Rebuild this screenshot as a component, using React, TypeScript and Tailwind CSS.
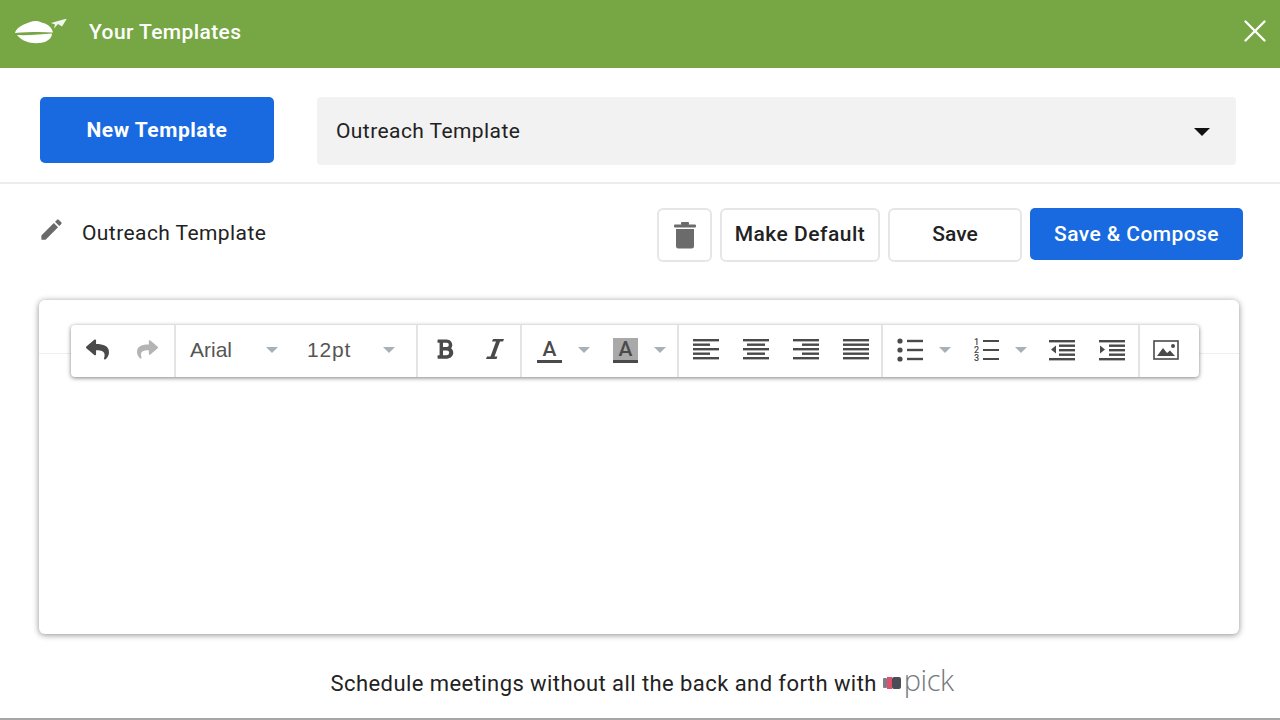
import { FaReply, FaShare, FaBold } from 'react-icons/fa';
import { MdEdit } from 'react-icons/md';
import { X } from 'lucide-react';

// Small grey triangle next to toolbar dropdowns
function Caret({ className = '' }: { className?: string }) {
  return <span className={`block w-0 h-0 border-x-[6px] border-x-transparent border-t-[6px] border-t-[#a9b1b8] ${className}`} />;
}

// Stacked bars used by alignment + indent icons. Each row: [x, width]
function Bars({ rows }: { rows: [number, number][] }) {
  return (
    <svg width="26" height="22" viewBox="0 0 26 22" fill="#4a4a4a">
      {rows.map(([x, w], i) => (
        <rect key={i} x={x} y={1 + i * 4.5} width={w} height="2.4" />
      ))}
    </svg>
  );
}

function Logo() {
  return (
    <svg width="54" height="30" viewBox="14 19 54 30" fill="#fff">
      <path d="M15 33c1-4 5-7 10-9 4-2 8-3.500 12-3 3 .500 5 2 8 2.500 4 1.500 7 5 8 9-12-1-26-.500-38 .500z" />
      <path d="M17 35c11 .500 25-.500 35-1.500 0 3-2 6-6 8-8 3-22 2.500-29-6.500z" />
      <path d="M51 23l16-4.500-5 8-4-2.500-4 4.500 1-4z" opacity=".9" />
    </svg>
  );
}

function TrashIcon() {
  return (
    <svg width="24" height="28" viewBox="0 0 24 28" fill="#6b6b6b">
      <rect x="1" y="3.5" width="22" height="3" rx="1" />
      <rect x="8" y="1" width="8" height="3" rx="1" />
      <path d="M3 8h18v17a2.500 2.500 0 0 1-2.500 2.500h-13A2.500 2.500 0 0 1 3 25z" />
    </svg>
  );
}

function ItalicIcon() {
  return (
    <svg width="18" height="20" viewBox="0 0 18 20" fill="#4a4a4a">
      <path d="M7 0h11l-1 2.500h-3L8.500 17.500h3l-1 2.500H0l1-2.500h3.500L10 2.500H6z" />
    </svg>
  );
}

function ToolBtn({ children, className = 'w-[50px]' }: { children: React.ReactNode; className?: string }) {
  return <div className={`flex items-center justify-center h-full pb-[2px] ${className}`}>{children}</div>;
}

function Group({ children, className = '' }: { children: React.ReactNode; className?: string }) {
  return <div className={`flex items-center h-full pb-[2px] border-r-2 border-[#e4e4e4] ${className}`}>{children}</div>;
}

function BulletIcon() {
  return (
    <svg width="26" height="24" viewBox="0 0 26 24" fill="#4a4a4a">
      <circle cx="3" cy="3" r="2.600" />
      <circle cx="3" cy="12" r="2.600" />
      <circle cx="3" cy="21" r="2.600" />
      <rect x="10" y="1.800" width="16" height="2.400" />
      <rect x="10" y="10.800" width="16" height="2.400" />
      <rect x="10" y="19.800" width="16" height="2.400" />
    </svg>
  );
}

function NumberedIcon() {
  return (
    <div className="relative w-[26px] h-[24px]">
      <div className="flex flex-col text-[9px] leading-[8px] font-medium font-['Roboto',sans-serif] text-[#4a4a4a] w-2">
        <span>1</span>
        <span>2</span>
        <span>3</span>
      </div>
      <div className="absolute left-[9px] top-[2px] flex flex-col gap-[6.600px]">
        <span className="block w-[16px] h-[2.400px] bg-[#4a4a4a]" />
        <span className="block w-[16px] h-[2.400px] bg-[#4a4a4a]" />
        <span className="block w-[16px] h-[2.400px] bg-[#4a4a4a]" />
      </div>
    </div>
  );
}

function IndentIcon({ out }: { out?: boolean }) {
  return (
    <svg width="26" height="22" viewBox="0 0 26 22" fill="#4a4a4a">
      <rect x="0" y="1" width="26" height="2.400" />
      <rect x="10" y="5.500" width="16" height="2.400" />
      <rect x="10" y="10" width="16" height="2.400" />
      <rect x="10" y="14.500" width="16" height="2.400" />
      <rect x="0" y="19" width="26" height="2.400" />
      {out ? <path d="M7 6.500v8l-5-4z" /> : <path d="M1 6.500v8l5-4z" />}
    </svg>
  );
}

function ImageIcon() {
  return (
    <svg width="26" height="20" viewBox="0 0 26 20">
      <rect x="1" y="1" width="24" height="18" fill="none" stroke="#4a4a4a" strokeWidth="1.600" />
      <path d="M4 16l6-8 4 5 3-2.500 5 5.500z" fill="#4a4a4a" />
      <circle cx="20" cy="6" r="2" fill="#4a4a4a" />
    </svg>
  );
}

export default function App() {
  return (
    <div className="w-[1280px] h-[720px] overflow-hidden bg-white flex flex-col font-['Roboto',sans-serif] border-b-2 border-[#a6a6a6]">
      {/* Header */}
      <header className="h-[68px] shrink-0 bg-[#76a744] flex items-center pl-[14px] pr-[6px]">
        <Logo />
        <h1 className="ml-[21px] mb-[2px] text-white text-[21px] font-medium tracking-[0.4px]">Your Templates</h1>
        <X className="ml-auto mb-[6px] text-white" size={38} strokeWidth={1.500} />
      </header>

      {/* Template picker */}
      <div className="h-[116px] shrink-0 border-b-2 border-[#ececec] flex items-start pt-[29px] pl-10 pr-[44px] gap-[43px]">
        <button className="w-[234px] h-[66px] pt-[2px] rounded-[5px] bg-[#196ae0] text-white text-[21px] font-bold tracking-[0.5px]">New Template</button>
        <div className="flex-1 h-[68px] pt-[2px] rounded-[4px] bg-[#f2f2f2] flex items-center pl-[19px] pr-[26px] text-[21px] text-[#222] tracking-[0.42px]">
          Outreach Template
          <Caret className="ml-auto border-x-[8px] border-t-[8px] !border-t-[#111]" />
        </div>
      </div>

      {/* Name + actions */}
      <div className="h-[116px] shrink-0 flex items-start pt-6 pl-[38px] pr-[37px]">
        <div className="flex items-center pt-[7px]">
          <MdEdit size={27} className="text-[#6a6a6a] -mt-[5px]" />
          <span className="ml-[17px] mt-[3px] text-[21px] text-[#222] tracking-[0.42px]">Outreach Template</span>
        </div>
        <div className="ml-auto flex gap-2 items-start">
          <button className="w-[55px] h-[54px] rounded-[6px] border-2 border-[#e6e6e6] flex items-center justify-center"><TrashIcon /></button>
          <button className="w-[160px] h-[54px] rounded-[6px] border-2 border-[#e6e6e6] text-[21px] font-medium text-[#222] tracking-[0.5px]">Make Default</button>
          <button className="w-[134px] h-[54px] rounded-[6px] border-2 border-[#e6e6e6] text-[21px] font-medium text-[#222]">Save</button>
          <button className="w-[213px] h-[52px] pt-[2px] rounded-[5px] bg-[#196ae0] text-white text-[21px] font-medium tracking-[0.42px]">Save &amp; Compose</button>
        </div>
      </div>

      {/* Editor */}
      <div className="relative h-[334px] shrink-0 mx-[39px] w-[1200px] rounded-[6px] bg-white shadow-[0_1px_6px_rgba(0,0,0,0.45)] pt-[25px] pl-8">
        <div className="absolute left-0 right-0 top-[53px] h-px bg-[#eeeeee]" />
        <div className="relative w-[1128px] h-[52px] rounded-[4px] bg-white shadow-[0_1px_4px_rgba(0,0,0,0.5)] flex items-center text-[#4a4a4a]">
          <Group className="w-[105px]">
            <div className="w-px" />
            <ToolBtn><FaReply size={23} className="text-[#4a4a4a]" /></ToolBtn>
            <ToolBtn><FaShare size={21} className="text-[#b4b4b4]" /></ToolBtn>
          </Group>
          <Group className="w-[242px] font-['Liberation_Sans',sans-serif] text-[21px] text-[#555]">
            <span className="ml-[14px] w-[76px]">Arial</span>
            <Caret />
            <span className="ml-[29px] w-[76px] tracking-[0.8px]">12pt</span>
            <Caret />
          </Group>
          <Group className="w-[104px]">
            <div className="w-[2px]" />
            <ToolBtn><FaBold size={22} /></ToolBtn>
            <ToolBtn><ItalicIcon /></ToolBtn>
          </Group>
          <Group className="w-[157px] font-['Roboto',sans-serif]">
            <div className="ml-[15px] w-[25px] h-[25px] flex flex-col items-center justify-end text-[21px] font-medium leading-[21px] border-b-[3px] border-[#4a4a4a]">A</div>
            <Caret className="ml-[16px]" />
            <div className="ml-[23px] w-[25px] h-[25px] flex flex-col items-center justify-end text-[21px] font-medium leading-[21px] bg-[#a9a9a9] border-b-[3px] border-[#4a4a4a]">A</div>
            <Caret className="ml-[16px]" />
          </Group>
          <Group className="w-[204px] pl-[2px]">
            <ToolBtn><Bars rows={[[0, 26], [0, 17], [0, 26], [0, 17], [0, 26]]} /></ToolBtn>
            <ToolBtn><Bars rows={[[0, 26], [4, 18], [0, 26], [4, 18], [0, 26]]} /></ToolBtn>
            <ToolBtn><Bars rows={[[0, 26], [9, 17], [0, 26], [9, 17], [0, 26]]} /></ToolBtn>
            <ToolBtn><Bars rows={[[0, 26], [0, 26], [0, 26], [0, 26], [0, 26]]} /></ToolBtn>
          </Group>
          <Group className="w-[257px]">
            <div className="ml-[14px]"><BulletIcon /></div>
            <Caret className="ml-[16px]" />
            <div className="ml-[23px]"><NumberedIcon /></div>
            <Caret className="ml-[15px]" />
            <div className="ml-[22px]"><IndentIcon out /></div>
            <div className="ml-6"><IndentIcon /></div>
          </Group>
          <ToolBtn className="flex-1 !justify-start pl-[13px]"><ImageIcon /></ToolBtn>
        </div>
      </div>

      {/* Footer */}
      <div className="flex-1 flex items-center justify-center text-[22px] text-[#222] pl-[4px] pt-[14px]">
        <span className="tracking-[0.43px]">Schedule meetings without all the back and forth with</span>
        <svg className="ml-[6px]" width="18" height="14" viewBox="0 0 18 14">
          <rect x="0" y="2" width="4" height="10" rx="1" fill="#7a7f86" />
          <rect x="4" y="1" width="5" height="12" fill="#e0506a" />
          <rect x="9" y="1" width="9" height="12" rx="2" fill="#4a4d55" />
        </svg>
        <span className="ml-[3px] font-['Open_Sans',sans-serif] font-light text-[29px] leading-none text-[#74787d] -mt-[8px] tracking-[-0.5px]">pick</span>
      </div>
    </div>
  );
}
